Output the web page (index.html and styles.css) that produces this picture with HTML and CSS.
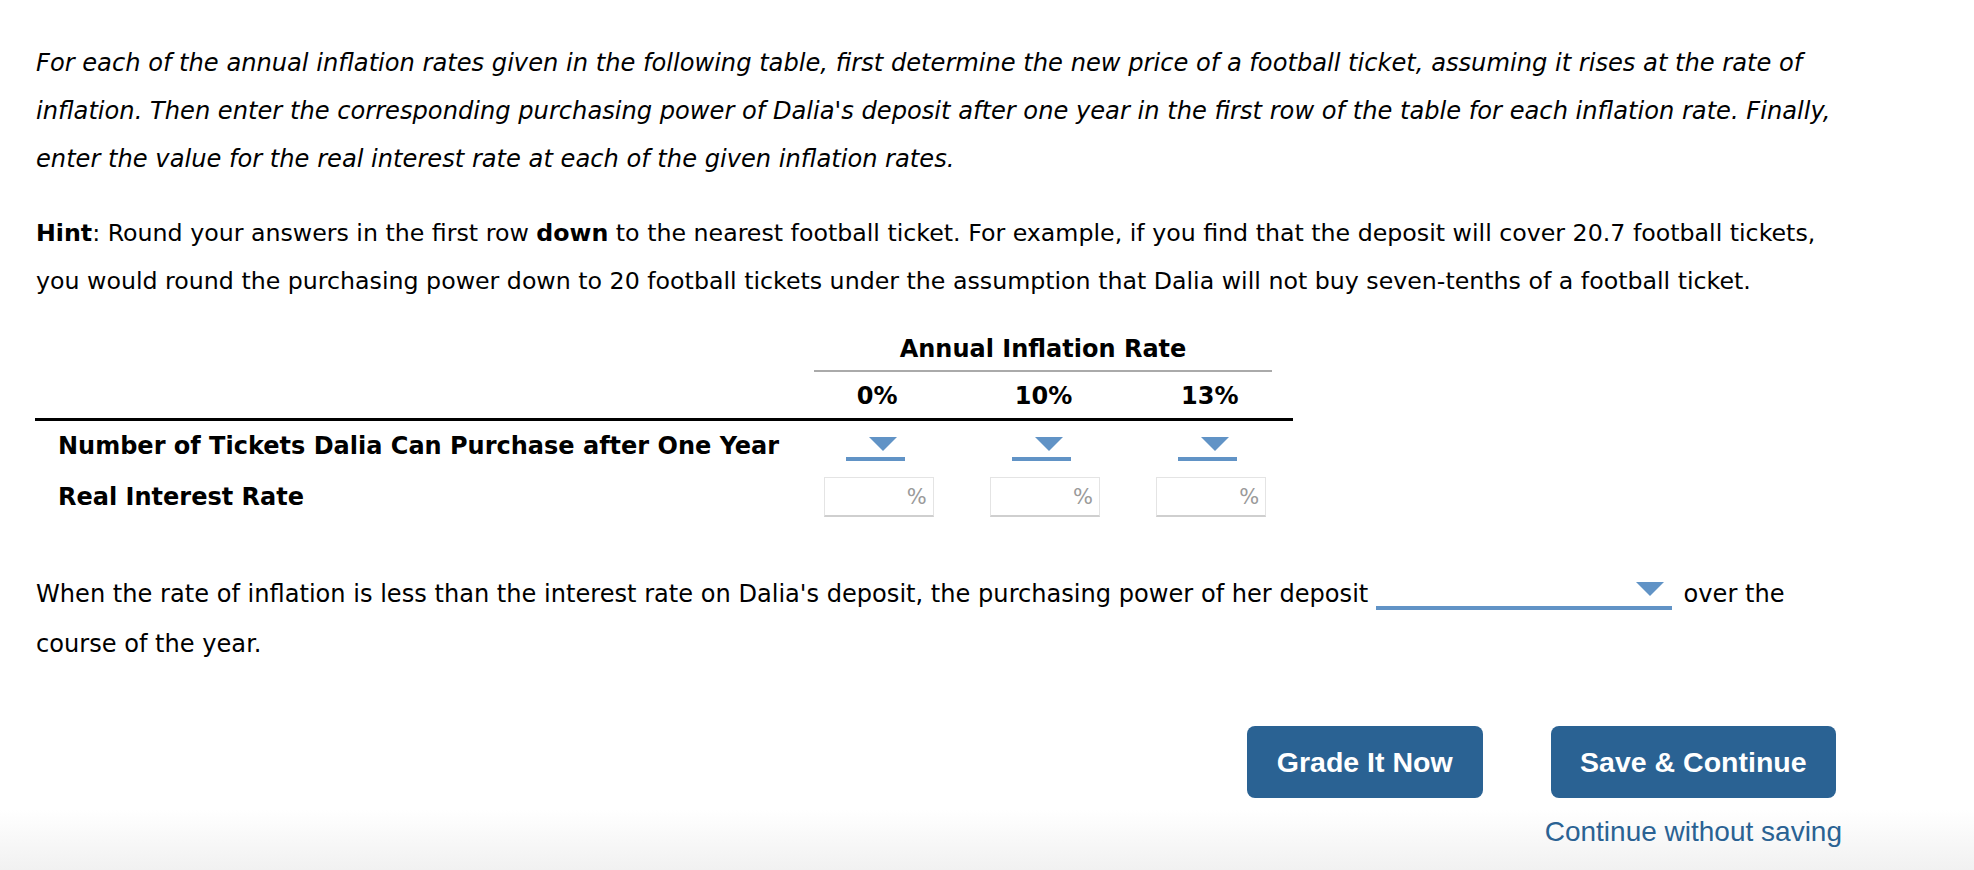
FILE: index.html
```html
<!DOCTYPE html>
<html>
<head>
<meta charset="utf-8">
<link rel="stylesheet" href="styles.css">
</head>
<body>
<div class="page">
  <p class="intro">For each of the annual inflation rates given in the following table, first determine the new price of a football ticket, assuming it rises at the rate of inflation. Then enter the corresponding purchasing power of Dalia's deposit after one year in the first row of the table for each inflation rate. Finally, enter the value for the real interest rate at each of the given inflation rates.</p>
  <p class="hint"><b>Hint</b>: Round your answers in the first row <b>down</b> to the nearest football ticket. For example, if you find that the deposit will cover 20.7 football tickets, you would round the purchasing power down to 20 football tickets under the assumption that Dalia will not buy seven-tenths of a football ticket.</p>

  <div class="table">
    <div class="group-head">Annual Inflation Rate</div>
    <div class="col-heads">
      <div class="blank"></div>
      <div class="ch">0%</div>
      <div class="ch">10%</div>
      <div class="ch">13%</div>
    </div>
    <div class="row row-tickets">
      <div class="label">Number of Tickets Dalia Can Purchase after One Year</div>
      <div class="cell"><span class="dd"><span class="tri"></span></span></div>
      <div class="cell"><span class="dd"><span class="tri"></span></span></div>
      <div class="cell"><span class="dd"><span class="tri"></span></span></div>
    </div>
    <div class="row row-rate">
      <div class="label">Real Interest Rate</div>
      <div class="cell"><span class="inp"><span class="pct">%</span></span></div>
      <div class="cell"><span class="inp"><span class="pct">%</span></span></div>
      <div class="cell"><span class="inp"><span class="pct">%</span></span></div>
    </div>
  </div>

  <p class="sentence">When the rate of inflation is less than the interest rate on Dalia's deposit, the purchasing power of her deposit <span class="wide-dd"><span class="tri"></span></span> over the course of the year.</p>

  <div class="actions">
    <button class="btn grade">Grade It Now</button>
    <div class="save-col">
      <button class="btn save">Save &amp; Continue</button>
      <a class="skip" href="#">Continue without saving</a>
    </div>
  </div>
</div>
</body>
</html>
```

FILE: styles.css
```css
html, body {
  margin: 0;
  padding: 0;
}
body {
  width: 1974px;
  height: 870px;
  overflow: hidden;
  background: linear-gradient(to bottom, #ffffff 0, #ffffff 810px, #f1f1f1 870px);
  font-family: "DejaVu Sans", Verdana, sans-serif;
  color: #000;
}
.page {
  padding: 39px 0 0 36px;
}
.intro, .hint, .sentence {
  margin: 0;
  font-size: 24px;
  line-height: 48px;
  width: 1815px;
}
.intro {
  font-style: italic;
  font-size: 24.15px;
}
.hint {
  margin-top: 26px;
  font-size: 23.7px;
}
.table {
  margin-top: 29px;
  width: 1258px;
  margin-left: -1px;
  font-weight: bold;
  font-size: 24px;
}
.group-head {
  margin-left: 779px;
  width: 458px;
  text-align: center;
  line-height: 30px;
  padding-bottom: 6px;
  border-bottom: 2px solid #aaaaaa;
}
.col-heads, .row {
  display: grid;
  grid-template-columns: 759px repeat(3, 1fr);
  line-height: 30px;
}
.col-heads {
  height: 46px;
  align-items: center;
  border-bottom: 3px solid #000;
}
.ch {
  text-align: center;
  padding-top: 2px;
}
.row {
  align-items: center;
}
.row-tickets {
  height: 50px;
}
.row-rate {
  height: 52px;
}
.label {
  padding-left: 23px;
}
.cell {
  display: flex;
  justify-content: center;
}
.dd {
  position: relative;
  width: 59px;
  height: 26px;
  border-bottom: 4px solid #6193c6;
  margin-left: -4px;
}
.tri {
  position: absolute;
  right: 8px;
  top: 6px;
  width: 0;
  height: 0;
  border-left: 14px solid transparent;
  border-right: 14px solid transparent;
  border-top: 14px solid #6193c6;
}
.inp {
  display: flex;
  justify-content: flex-end;
  align-items: center;
  box-sizing: border-box;
  width: 110px;
  height: 40px;
  border: 1px solid #e4e4e4;
  border-bottom: 2px solid #cfcfcf;
  padding-right: 6px;
  margin-left: 3px;
  font-weight: normal;
  font-size: 21px;
  color: #9a9a9a;
  background: #fff;
}
.sentence {
  margin-top: 46px;
  line-height: 50px;
  font-size: 24.1px;
}
.wide-dd {
  position: relative;
  display: inline-block;
  vertical-align: -8px;
  width: 296px;
  height: 26px;
  border-bottom: 4px solid #6193c6;
  margin: 0 4px 0 0;
}
.wide-dd .tri {
  right: 8px;
  top: 2px;
}
.actions {
  display: flex;
  justify-content: flex-end;
  align-items: flex-start;
  gap: 62px;
  padding-right: 132px;
  margin-top: 57px;
}
.save-col {
  display: flex;
  flex-direction: column;
  align-items: center;
}
.btn {
  height: 72px;
  border: none;
  border-radius: 8px;
  background: #2a6293;
  color: #fff;
  font-family: "Liberation Sans", Arial, Helvetica, sans-serif;
  font-weight: bold;
  font-size: 28.5px;
  padding: 0;
}
.grade {
  width: 236px;
}
.save {
  width: 285px;
}
.skip {
  margin-top: 18px;
  font-family: "Liberation Sans", Arial, Helvetica, sans-serif;
  font-size: 28px;
  line-height: 32px;
  color: #2a6293;
  text-decoration: none;
}
```
